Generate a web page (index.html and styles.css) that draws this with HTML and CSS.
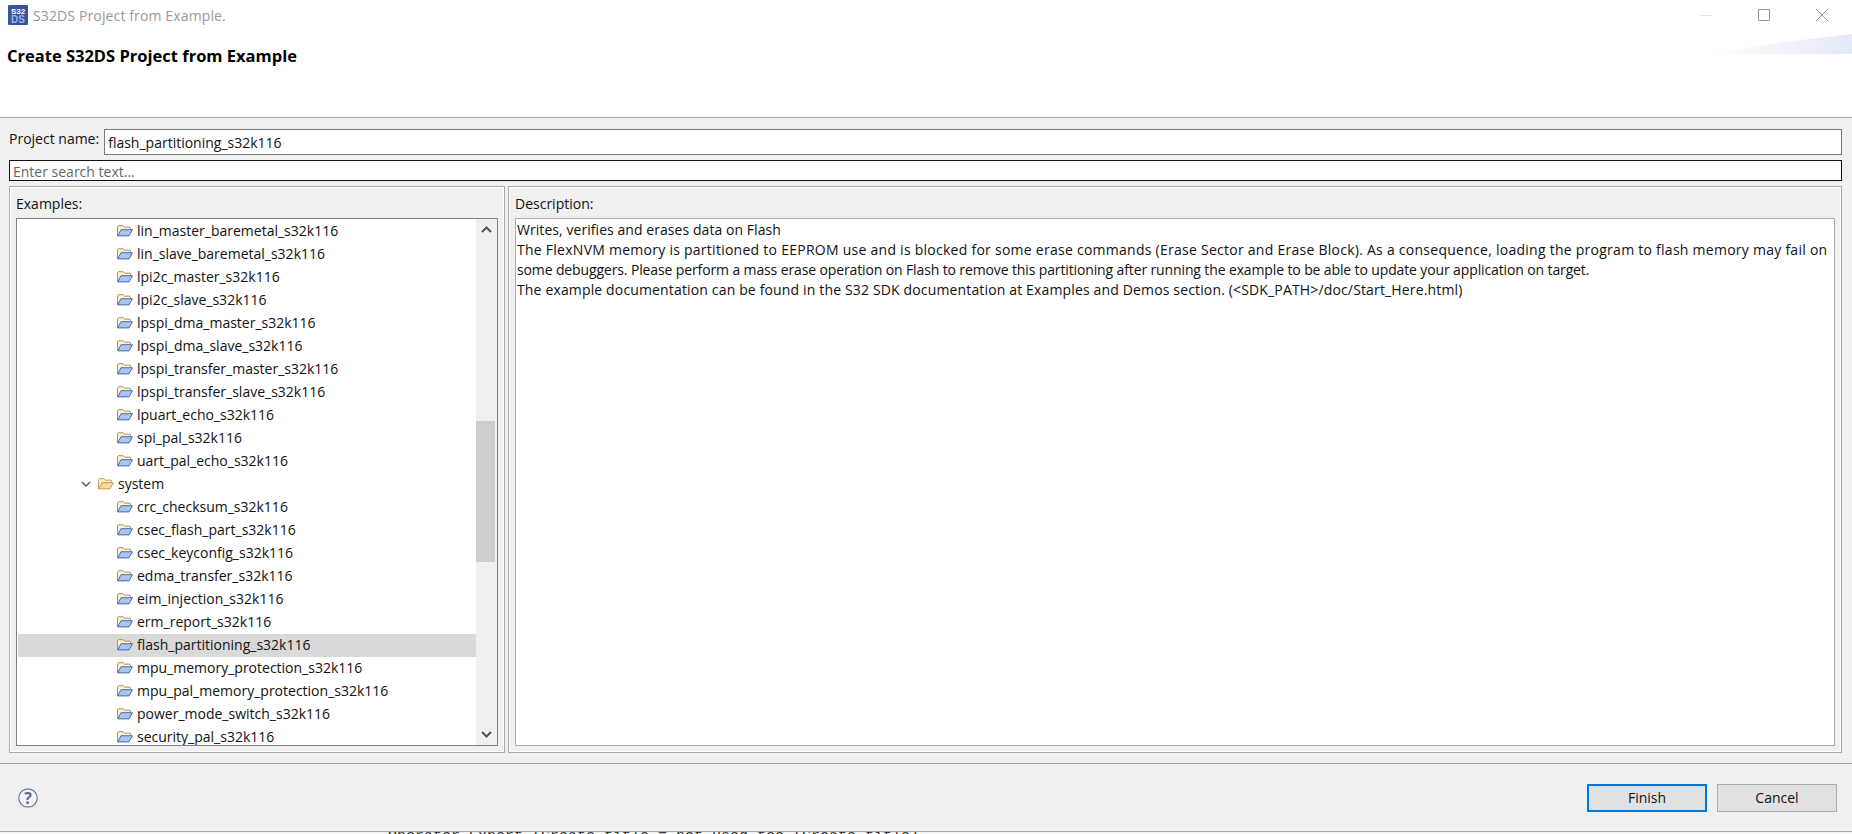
FILE: index.html
```html
<!DOCTYPE html>
<html lang="en">
<head>
<meta charset="utf-8">
<title>S32DS Project from Example.</title>
<link rel="stylesheet" href="styles.css">
</head>
<body>
<div class="window">
  <div class="titlebar">
    <svg class="app-icon" width="20" height="20" viewBox="0 0 20 20"><rect width="20" height="20" rx="1" fill="#34559f"/><text x="10" y="8.5" text-anchor="middle" class="logo-top">S32</text><text x="10" y="18" text-anchor="middle" class="logo-bottom">DS</text></svg>
    <span class="app-title">S32DS Project from Example.</span>
    <div class="win-controls">
      <svg width="14" height="14" viewBox="0 0 14 14"><path d="M1 7.5H13" stroke="#e3e3e3"/></svg>
      <svg width="14" height="14" viewBox="0 0 14 14"><rect x="1.5" y="1.5" width="11" height="11" fill="none" stroke="#999"/></svg>
      <svg width="14" height="14" viewBox="0 0 14 14"><path d="M1 1L13 13M13 1L1 13" stroke="#999" fill="none"/></svg>
    </div>
  </div>
  <div class="banner">
    <h1 class="banner-title">Create S32DS Project from Example</h1>
    <div class="banner-swoosh"></div>
  </div>
  <div class="body">
    <div class="name-row">
      <label class="name-label">Project name:</label>
      <div class="name-input">flash_partitioning_s32k116</div>
    </div>
    <div class="search-input">Enter search text...</div>
    <div class="panes">
      <section class="pane pane-left">
        <div class="pane-label">Examples:</div>
        <div class="tree-box">
          <div class="tree">
            <div class="row leaf"><svg class="folder"><use href="#fb"/></svg>lin_master_baremetal_s32k116</div>
            <div class="row leaf"><svg class="folder"><use href="#fb"/></svg>lin_slave_baremetal_s32k116</div>
            <div class="row leaf"><svg class="folder"><use href="#fb"/></svg>lpi2c_master_s32k116</div>
            <div class="row leaf"><svg class="folder"><use href="#fb"/></svg>lpi2c_slave_s32k116</div>
            <div class="row leaf"><svg class="folder"><use href="#fb"/></svg>lpspi_dma_master_s32k116</div>
            <div class="row leaf"><svg class="folder"><use href="#fb"/></svg>lpspi_dma_slave_s32k116</div>
            <div class="row leaf"><svg class="folder"><use href="#fb"/></svg>lpspi_transfer_master_s32k116</div>
            <div class="row leaf"><svg class="folder"><use href="#fb"/></svg>lpspi_transfer_slave_s32k116</div>
            <div class="row leaf"><svg class="folder"><use href="#fb"/></svg>lpuart_echo_s32k116</div>
            <div class="row leaf"><svg class="folder"><use href="#fb"/></svg>spi_pal_s32k116</div>
            <div class="row leaf"><svg class="folder"><use href="#fb"/></svg>uart_pal_echo_s32k116</div>
            <div class="row group"><svg class="chevron" width="10" height="6" viewBox="0 0 10 6"><path d="M1 1L5 5L9 1" fill="none" stroke="#555" stroke-width="1.4"/></svg><svg class="folder"><use href="#fo"/></svg>system</div>
            <div class="row leaf"><svg class="folder"><use href="#fb"/></svg>crc_checksum_s32k116</div>
            <div class="row leaf"><svg class="folder"><use href="#fb"/></svg>csec_flash_part_s32k116</div>
            <div class="row leaf"><svg class="folder"><use href="#fb"/></svg>csec_keyconfig_s32k116</div>
            <div class="row leaf"><svg class="folder"><use href="#fb"/></svg>edma_transfer_s32k116</div>
            <div class="row leaf"><svg class="folder"><use href="#fb"/></svg>eim_injection_s32k116</div>
            <div class="row leaf"><svg class="folder"><use href="#fb"/></svg>erm_report_s32k116</div>
            <div class="row leaf selected"><svg class="folder"><use href="#fb"/></svg>flash_partitioning_s32k116</div>
            <div class="row leaf"><svg class="folder"><use href="#fb"/></svg>mpu_memory_protection_s32k116</div>
            <div class="row leaf"><svg class="folder"><use href="#fb"/></svg>mpu_pal_memory_protection_s32k116</div>
            <div class="row leaf"><svg class="folder"><use href="#fb"/></svg>power_mode_switch_s32k116</div>
            <div class="row leaf"><svg class="folder"><use href="#fb"/></svg>security_pal_s32k116</div>
          </div>
          <div class="scrollbar">
            <svg class="sb-arrow" width="11" height="7" viewBox="0 0 11 7"><path d="M1 6L5.5 1.5L10 6" fill="none" stroke="#555" stroke-width="2"/></svg>
            <div class="sb-track"><div class="sb-thumb"></div></div>
            <svg class="sb-arrow" width="11" height="7" viewBox="0 0 11 7"><path d="M1 1L5.5 5.5L10 1" fill="none" stroke="#555" stroke-width="2"/></svg>
          </div>
        </div>
      </section>
      <section class="pane pane-right">
        <div class="pane-label">Description:</div>
        <div class="desc-box">
          <div class="line line-a">Writes, verifies and erases data on Flash</div>
          <div class="line line-b">The FlexNVM memory is partitioned to EEPROM use and is blocked for some erase commands (Erase Sector and Erase Block). As a consequence, loading the program to flash memory may fail on</div>
          <div class="line line-c">some debuggers. Please perform a mass erase operation on Flash to remove this partitioning after running the example to be able to update your application on target.</div>
          <div class="line line-d">The example documentation can be found in the S32 SDK documentation at Examples and Demos section. (&lt;SDK_PATH&gt;/doc/Start_Here.html)</div>
        </div>
      </section>
    </div>
  </div>
  <div class="footer">
    <svg class="help" width="20" height="20" viewBox="0 0 20 20"><circle cx="10" cy="10" r="9.2" fill="#f4f6f9" stroke="#6d7d9c" stroke-width="1.2"/><text x="10" y="15.5" text-anchor="middle" class="help-q">?</text></svg>
    <div class="buttons">
      <button class="btn btn-default">Finish</button>
      <button class="btn">Cancel</button>
    </div>
  </div>
</div>
<div class="behind"><div class="behind-text">Operator Expert (Create title = not used too (Create title)</div></div>
<svg class="defs" width="0" height="0">
  <defs>
    <symbol id="fb" viewBox="0 0 16 14" preserveAspectRatio="none"><path d="M.5 12.5V2L1.5.8H6L7.5 2.5H13L13.5 3.5V5" fill="#fdf2cf" stroke="#a58a55"/><path d="M.7 12.7L4 5.5H15.5L12 12.7Z" fill="#a9c6ee" stroke="#3e62b0"/></symbol>
    <symbol id="fo" viewBox="0 0 16 14" preserveAspectRatio="none"><path d="M.5 12.5V2L1.5.8H6L7.5 2.5H13L13.5 3.5V5" fill="#fdeec6" stroke="#c09a5a"/><path d="M.7 12.7L4 5.5H15.5L12 12.7Z" fill="#f8dca0" stroke="#c8924a"/></symbol>
  </defs>
</svg>
</body>
</html>
```
FILE: styles.css
```css
html, body { margin: 0; padding: 0; }
body { width: 1852px; height: 834px; overflow: hidden; background: #fff; font-family: "Open Sans", "Noto Sans", sans-serif; font-size: 14px; color: #111; }
.window { display: flex; flex-direction: column; height: 831px; box-shadow: 0 1px 1px #aaa; position: relative; }
.defs { position: absolute; }
.titlebar { display: flex; align-items: center; height: 32px; flex: none; padding: 0 0 2px 8px; box-sizing: border-box; }
.app-icon { flex: none; margin-right: 5px; }
.logo-top { font-family: "Liberation Sans", sans-serif; font-size: 8px; font-weight: 700; fill: #fff; }
.logo-bottom { font-family: "Liberation Sans", sans-serif; font-size: 10px; font-weight: 700; fill: #9db4e4; }
.app-title { color: #999; font-size: 14px; letter-spacing: .13px; }
.win-controls { margin-left: auto; display: flex; gap: 44px; padding-right: 23px; }
.banner { position: relative; height: 85px; flex: none; border-bottom: 1px solid #a0a0a0; }
.banner-title { margin: 14px 0 0 7px; font-size: 16.5px; font-weight: 700; line-height: 20px; color: #000; }
.banner-swoosh { position: absolute; right: 0; top: 2px; width: 139px; height: 20px; background: linear-gradient(90deg, #fff, #e3e9f8); clip-path: polygon(0 100%, 40% 50%, 100% 0, 100% 100%); }
.body { flex: 1; min-height: 0; display: flex; flex-direction: column; background: #f0f0f0; padding: 11px 10px 10px 9px; gap: 5px; }
.name-row { display: flex; align-items: flex-start; gap: 5px; height: 26px; flex: none; }
.name-label { white-space: nowrap; line-height: 20px; }
.name-input { flex: 1; height: 26px; box-sizing: border-box; border: 1px solid #7a7a7a; background: #fff; padding: 0 3px; line-height: 25px; }
.search-input { height: 21px; flex: none; box-sizing: border-box; border: 1px solid #111; background: #fff; color: #666; padding: 0 3px; line-height: 21px; }
.panes { flex: 1; min-height: 0; display: flex; gap: 3px; }
.pane { display: flex; flex-direction: column; box-sizing: border-box; border: 1px solid #aaa; box-shadow: inset 0 0 0 1px #fff; padding: 0 6px 6px; }
.pane-left { width: 496px; flex: none; }
.pane-right { flex: 1; min-width: 0; }
.pane-label { height: 31px; line-height: 33px; flex: none; }
.tree-box { flex: 1; min-height: 0; display: flex; border: 1px solid #808080; background: #fff; overflow: hidden; }
.tree { flex: 1; min-width: 0; overflow: hidden; margin-left: 1px; padding-top: 1px; }
.row { display: flex; align-items: center; height: 23px; box-sizing: border-box; padding-bottom: 2px; white-space: nowrap; }
.row.leaf { padding-left: 99px; }
.row.group { padding-left: 63px; }
.row.selected { background: #d9d9d9; }
.folder { width: 16px; height: 12px; margin-right: 4px; flex: none; }
.chevron { margin-right: 7px; flex: none; }
.scrollbar { width: 21px; flex: none; background: #f0f0f0; display: flex; flex-direction: column; align-items: center; }
.sb-arrow { flex: none; margin: 7px 0; }
.sb-track { flex: 1; width: 100%; position: relative; }
.sb-thumb { position: absolute; left: 0; top: 181px; width: 19px; height: 141px; background: #cdcdcd; }
.desc-box { flex: 1; border: 1px solid #aaa; background: #fff; padding: 1px; line-height: 20px; overflow: hidden; }
.line { white-space: nowrap; }
.line-a { letter-spacing: .06px; }
.line-b { letter-spacing: .26px; }
.line-c { letter-spacing: -.125px; }
.line-d { letter-spacing: .15px; }
.footer { height: 68px; flex: none; box-sizing: border-box; border-top: 1px solid #a0a0a0; background: #f0f0f0; display: flex; align-items: center; padding: 0 15px 0 18px; }
.help { flex: none; }
.help-q { font-family: "Open Sans", sans-serif; font-size: 16px; font-weight: 700; fill: #5a6b8c; }
.buttons { margin-left: auto; display: flex; gap: 10px; }
.btn { width: 120px; height: 28px; box-sizing: border-box; border: 1px solid #adadad; background: #e1e1e1; font: inherit; color: #111; padding: 0; }
.btn-default { border: 2px solid #0078d7; }
.behind { height: 3px; overflow: hidden; padding-left: 388px; }
.behind-text { margin-top: -3px; font-family: "Liberation Mono", monospace; font-size: 15px; line-height: 17px; white-space: nowrap; color: #222; }
```
